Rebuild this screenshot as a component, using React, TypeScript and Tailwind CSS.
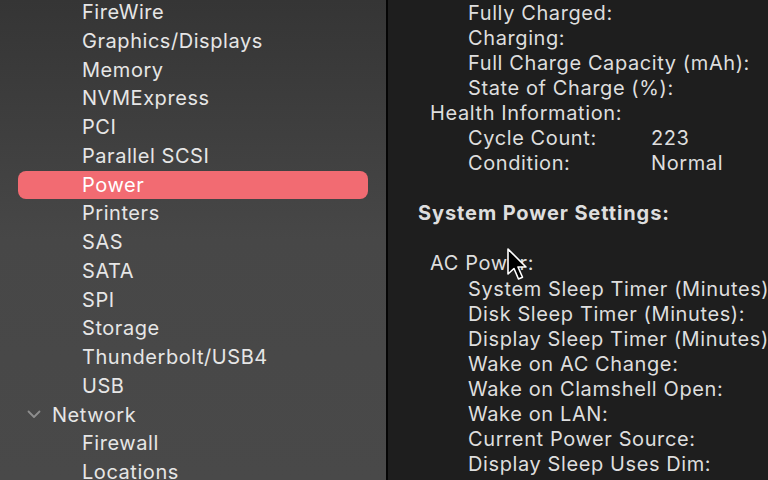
import React from "react"

const SIDEBAR_ITEMS = [
  "FireWire",
  "Graphics/Displays",
  "Memory",
  "NVMExpress",
  "PCI",
  "Parallel SCSI",
  "Power",
  "Printers",
  "SAS",
  "SATA",
  "SPI",
  "Storage",
  "Thunderbolt/USB4",
  "USB",
]

type Row = { label: string; value?: string; level: 0 | 1 | 2; bold?: boolean }

const DETAIL_ROWS: (Row | null)[] = [
  { label: "Fully Charged:", level: 2 },
  { label: "Charging:", level: 2 },
  { label: "Full Charge Capacity (mAh):", level: 2 },
  { label: "State of Charge (%):", level: 2 },
  { label: "Health Information:", level: 1 },
  { label: "Cycle Count:", value: "223", level: 2 },
  { label: "Condition:", value: "Normal", level: 2 },
  null,
  { label: "System Power Settings:", level: 0, bold: true },
  null,
  { label: "AC Power:", level: 1 },
  { label: "System Sleep Timer (Minutes):", level: 2 },
  { label: "Disk Sleep Timer (Minutes):", level: 2 },
  { label: "Display Sleep Timer (Minutes):", level: 2 },
  { label: "Wake on AC Change:", level: 2 },
  { label: "Wake on Clamshell Open:", level: 2 },
  { label: "Wake on LAN:", level: 2 },
  { label: "Current Power Source:", level: 2 },
  { label: "Display Sleep Uses Dim:", level: 2 },
]

function Chevron() {
  return (
    <svg width="14" height="9" viewBox="0 0 14 9" className="mr-[11px]">
      <path d="M1.5 1.5 L7 7 L12.5 1.5" fill="none" stroke="#8e8e8e" strokeWidth="1.8" strokeLinecap="round" strokeLinejoin="round" />
    </svg>
  )
}

function Cursor() {
  return (
    <svg width="26" height="36" viewBox="0 0 26 36" className="absolute left-[505px] top-[247px] pointer-events-none">
      <path
        d="M3 2 L3 27 L9 21.5 L13.5 32 L17.5 30.2 L13 20 L21 20 Z"
        fill="#000"
        stroke="#fff"
        strokeWidth="1.6"
        strokeLinejoin="round"
      />
    </svg>
  )
}

export default function App() {
  return (
    <div
      className="relative flex w-[768px] h-[480px] overflow-hidden"
      style={{ fontFamily: "Inter, 'Noto Sans', sans-serif" }}
    >
      {/* sidebar */}
      <div className="w-[386px] shrink-0 h-full bg-gradient-to-b from-[#353535] via-[#474747] to-[#494949] text-[#e6e6e6] text-[20px] leading-[28.75px] tracking-[0.55px]">
        <div className="-mt-[2px] px-[18px]">
          {SIDEBAR_ITEMS.map((item) => (
            <div
              key={item}
              className={`h-[28.75px] pl-[64px] rounded-[8px] ${item === "Power" ? "bg-[#f26b72] text-white" : ""}`}
            >
              {item}
            </div>
          ))}
          <div className="h-[28.75px] flex items-center pl-[9px]">
            <Chevron />
            <span>Network</span>
          </div>
          <div className="h-[28.75px] pl-[64px]">Firewall</div>
          <div className="h-[28.75px] pl-[64px]">Locations</div>
        </div>
      </div>

      {/* divider */}
      <div className="w-[2px] shrink-0 h-full bg-[#050505]" />

      {/* detail pane */}
      <div className="flex-1 min-w-0 h-full bg-[#1e1e1e] text-[#dedede] text-[20px] leading-[25.1px] tracking-[0.6px] whitespace-nowrap">
        <div className="mt-[0.5px] pl-[30px]">
          {DETAIL_ROWS.map((row, i) =>
            row === null ? (
              <div key={i} className="h-[25.1px]" />
            ) : (
              <div
                key={i}
                className={`flex h-[25.1px] ${row.level === 1 ? "pl-[12px]" : row.level === 2 ? "pl-[50px]" : ""} ${row.bold ? "font-bold tracking-[0.9px]" : ""}`}
              >
                <span className={row.value ? "w-[183px]" : ""}>{row.label}</span>
                {row.value && <span>{row.value}</span>}
              </div>
            )
          )}
        </div>
      </div>

      <Cursor />
    </div>
  )
}
